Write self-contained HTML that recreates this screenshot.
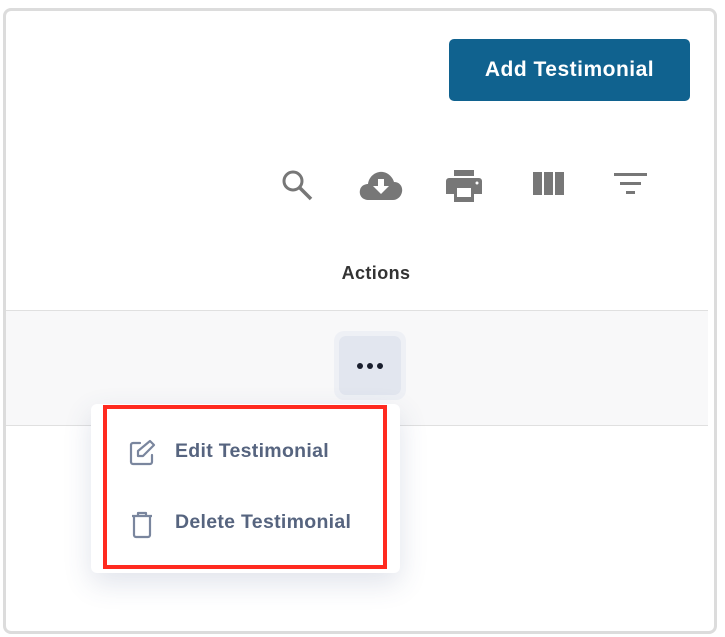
<!DOCTYPE html>
<html><head><meta charset="utf-8"><style>
*{margin:0;padding:0;box-sizing:border-box}
body{width:725px;height:637px;background:#fff;position:relative;overflow:hidden;font-family:"Liberation Sans",sans-serif}
.outer{position:absolute;left:3px;top:8px;width:714px;height:626px;border:3px solid #dcdcdc;border-radius:8px;background:#fff}
.btn{position:absolute;left:449px;top:39px;width:241px;height:62px;background:#10628f;border-radius:5px;color:#fff;font-size:21px;font-weight:bold;text-align:center;line-height:62px;letter-spacing:0.5px}
.ic{position:absolute}
.hdr{position:absolute;left:290px;width:172px;top:263px;text-align:center;font-size:18px;font-weight:bold;color:#333;letter-spacing:0.4px}
.row{position:absolute;left:6px;width:702px;top:310px;height:116px;background:#f8f8f9;border-top:1px solid #e0e0e0;border-bottom:1px solid #e0e0e0}
.dots{position:absolute;left:334px;top:331px;width:72px;height:69px;border-radius:10px;background:#eef0f5}
.dots i{position:absolute;left:5px;top:5px;width:62px;height:59px;border-radius:7px;background:#e2e6ef}
.menu{position:absolute;left:91px;top:404px;width:309px;height:169px;background:#fff;border-radius:6px;box-shadow:0 10px 28px rgba(60,80,130,.16)}
.red{position:absolute;left:103px;top:405px;width:284px;height:164px;border:4px solid #ff2a1f}
.it{position:absolute;left:175px;font-size:19.5px;font-weight:bold;color:#56647f;letter-spacing:0.3px}
</style></head><body>
<div class="outer"></div>
<div class="btn">Add Testimonial</div>
<svg class="ic" style="left:280px;top:168px" width="34" height="34" viewBox="0 0 34 34"><circle cx="13" cy="13" r="9" fill="none" stroke="#777" stroke-width="3"/><path d="M20 20 L31 31" stroke="#777" stroke-width="3.5"/></svg>
<svg class="ic" style="left:359px;top:170px" width="44" height="30" viewBox="0 0 44 30"><path d="M10 30 C2 30 0 24 1 20 C2 15 7 14 9 14 C10 6 17 1 24 2 C30 3 34 8 35 12 C41 12 44 17 43 22 C42 27 38 30 34 30 Z" fill="#777"/><path d="M19 9 h6 v7 h5 l-8 8 l-8 -8 h5z" fill="#fff"/></svg>
<svg class="ic" style="left:446px;top:168px" width="36" height="34" viewBox="0 0 36 34"><rect x="8" y="2" width="20" height="6" fill="#777"/><path d="M3 10 h30 a3 3 0 0 1 3 3 v13 h-8 v8 h-20 v-8 h-8 v-13 a3 3 0 0 1 3 -3z" fill="#777"/><rect x="11" y="20" width="14" height="9" fill="#fff"/><circle cx="31" cy="15" r="1.5" fill="#fff"/></svg>
<svg class="ic" style="left:533px;top:172px" width="31" height="24" viewBox="0 0 31 24"><rect x="0" y="0" width="9" height="23" fill="#777"/><rect x="11" y="0" width="9" height="23" fill="#777"/><rect x="22" y="0" width="9" height="23" fill="#777"/></svg>
<svg class="ic" style="left:614px;top:173px" width="34" height="22" viewBox="0 0 34 22"><rect x="0" y="0" width="33" height="3" fill="#777"/><rect x="6" y="9" width="21" height="3" fill="#777"/><rect x="12" y="18" width="9" height="3" fill="#777"/></svg>
<div class="hdr">Actions</div>
<div class="row"></div>
<div class="dots"><i></i><svg style="position:absolute;left:22px;top:31px" width="28" height="8"><circle cx="4" cy="4" r="3" fill="#1a1f2e"/><circle cx="14" cy="4" r="3" fill="#1a1f2e"/><circle cx="24" cy="4" r="3" fill="#1a1f2e"/></svg></div>
<div class="menu"></div>
<div class="red"></div>
<svg class="ic" style="left:129px;top:439px" width="28" height="28" viewBox="0 0 28 28" fill="none" stroke="#7a869e" stroke-width="2.2" stroke-linejoin="round" stroke-linecap="round"><path d="M11 4 H4 a2 2 0 0 0 -2 2 v17 a2 2 0 0 0 2 2 h17 a2 2 0 0 0 2 -2 v-7"/><path d="M21 2 l4 4 l-11 11 h-5 v-5 z"/></svg>
<svg class="ic" style="left:131px;top:511px" width="22" height="28" viewBox="0 0 22 28" fill="none" stroke="#7a869e" stroke-width="2.2" stroke-linejoin="round"><path d="M1 5 h20"/><path d="M7 5 v-3 h8 v3"/><path d="M3 5 v19 a2 2 0 0 0 2 2 h12 a2 2 0 0 0 2 -2 v-19"/></svg>
<div class="it" style="top:440px">Edit Testimonial</div>
<div class="it" style="top:511px">Delete Testimonial</div>
</body></html>
